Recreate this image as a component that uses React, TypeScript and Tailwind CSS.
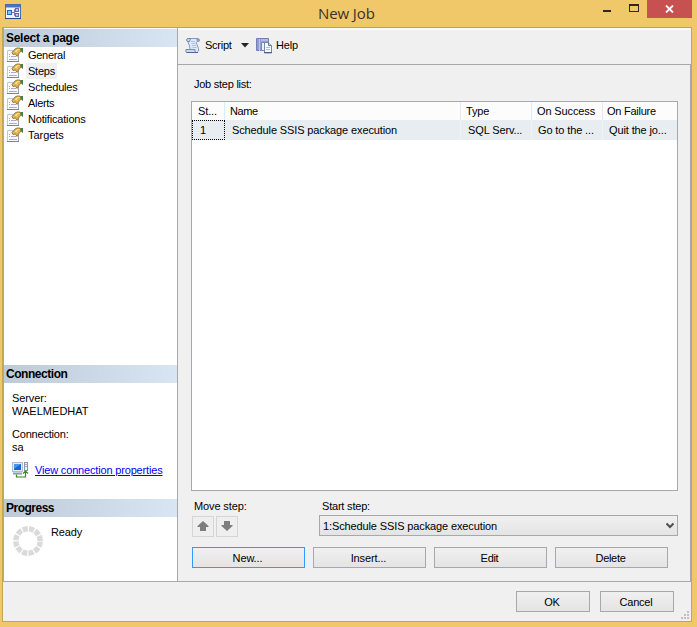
import type { ReactNode } from 'react';

function PageIcon() {
  return (
    <svg width="16" height="16" viewBox="0 0 16 16" className="shrink-0">
      <path d="M.5 3.500h11v11H.500z" fill="#fafbfe" stroke="#c3c8d8" />
      <path d="M0 14.500h12" fill="none" stroke="#76809f" />
      <path d="M11.500 14V8" fill="none" stroke="#98a0b8" />
      <path d="M2 7.500h1M2 9.500h1M2 12.500h1" stroke="#a3aed0" />
      <path d="M4 9.500h5M3 12.500h7" stroke="#a3aed0" />
      <path d="M5 5.500l3-3.500 2-1h3l1 3-2.500 3L10 9.500 8.500 7 6 7.500z" fill="#e5b445" stroke="#856632" strokeWidth=".8" />
      <path d="M5 4.500L7 2.500l1 .5-2 2.500z" fill="#9b9b98" />
      <path d="M7.500 4.500l3-2.500 2.500.5-2.500 1-1 2z" fill="#ffe68c" />
      <path d="M13.500 1H16v5l-2-1.500z" fill="#3f7e51" />
    </svg>
  );
}

function AppIcon() {
  return (
    <svg width="16" height="16" viewBox="0 0 16 16" className="mt-1 ml-[5px] shrink-0">
      <rect x=".5" y=".5" width="15" height="14" fill="#eef3fd" stroke="#4a6cae" />
      <path d="M1 1h14v2.500H1z" fill="#4673cb" />
      <path d="M0 14.500h16" stroke="#24457f" />
      <path d="M7 8.500h2M11 5.500H9.500v6H11" fill="none" stroke="#7b72b0" />
      <rect x="2.500" y="6.500" width="4" height="4" fill="#8fc0fa" stroke="#2b62cd" />
      <rect x="10.500" y="4.500" width="3" height="3" fill="#c5bce8" stroke="#7067ac" />
      <rect x="10.500" y="9.500" width="3" height="3" fill="#c5bce8" stroke="#7067ac" />
    </svg>
  );
}

function ScriptIcon() {
  return (
    <svg width="17" height="17" viewBox="0 0 17 17" className="shrink-0">
      <path d="M2.500 1.500h11q2 1 .5 3h-2q-1.500 1 0 3l1.500 4q1 3-1.500 4H3l2-3.500-.5-3L3 5Q.5 2.500 2.500 1.500z" fill="#dce8fb" stroke="#8599c0" />
      <path d="M2.500 1.500h3l-1 3H2.500Q.5 3 2.500 1.500zM1 12.500h9q-1 2 1.500 3H2Q0 15 1 12.500z" fill="#c9d7f0" stroke="#748ab5" />
      <path d="M1.500 15.500H13" stroke="#4f6797" />
      <path d="M6 4.500h4M6.500 6.500h4M7 8.500h4M7.500 10.500h4" stroke="#afc2e5" />
      <path d="M11 2h3v2h-2z" fill="#8aa1d0" />
    </svg>
  );
}

function HelpIcon() {
  return (
    <svg width="17" height="17" viewBox="0 0 17 17" className="shrink-0">
      <path d="M.5 1.500h12v12H.500z" fill="#949dce" stroke="#747eb4" />
      <path d="M3.500 2v12" stroke="#bcc5ea" />
      <path d="M5 2h7v2H5z" fill="#b3bce5" />
      <path d="M5.500 5.500h4l2 2v6h-6z" fill="#edf2fc" stroke="#7889af" />
      <path d="M8.500 5.500h4l3 3v7.500h-7z" fill="#f7faff" stroke="#7488a8" />
      <path d="M12.500 5.500v3h3" fill="#c6d8ed" stroke="#62789b" />
      <path d="M10 10.500h4M10 12.500h4" stroke="#a9bdd6" />
      <path d="M8 15.500h8" stroke="#4c6285" />
    </svg>
  );
}

function ConnectionIcon() {
  return (
    <svg width="17" height="17" viewBox="0 0 17 17" className="shrink-0">
      <rect x=".5" y=".5" width="10" height="9" fill="#e8edf5" stroke="#b0bad0" />
      <rect x="2" y="2" width="7" height="6" fill="#1764d9" />
      <path d="M2 2h7L2 7z" fill="#4596ee" />
      <path d="M1 11.500h9" stroke="#8c98b0" strokeWidth="2" />
      <rect x="12.500" y=".5" width="3" height="8" fill="#eef1f5" stroke="#8a96aa" />
      <path d="M13 2.500h2M13 4.500h2" stroke="#a4afbd" />
      <path d="M4.500 12.500v2.500h9V9M11 11.500l2.500-2.500 2.500 2.500" fill="none" stroke="#2f9113" strokeWidth="1.200" />
    </svg>
  );
}

function Spinner() {
  return (
    <svg width="30" height="30" viewBox="0 0 30 30" className="mt-[9px] ml-[9px] shrink-0">
      <circle cx="15" cy="15" r="12.200" fill="none" stroke="#dadada" strokeWidth="5.400" strokeDasharray="5.188 1.200" strokeDashoffset="-.6" />
    </svg>
  );
}

function SectionTitle({ children }: { children: ReactNode }) {
  return (
    <h2 className="h-[18px] shrink-0 bg-linear-to-r from-[#bdcbd9] to-[#d8e5f3] pl-0.5 text-[12px] leading-[18px] font-bold">
      {children}
    </h2>
  );
}

function Button({ children, className }: { children: ReactNode; className: string }) {
  return (
    <button className={`flex h-[21px] items-center justify-center border bg-linear-to-b from-[#f0f0f0] to-[#e4e4e4] pt-px pr-0.5 ${className}`}>
      {children}
    </button>
  );
}

function Arrow({ down }: { down?: boolean }) {
  return (
    <button className="flex h-[21px] w-[22px] items-center justify-center border border-[#d5d5d5] bg-[#efefef] pr-px pb-px">
      <svg width="12" height="12" viewBox="0 0 12 12" className={down ? 'rotate-180' : ''}>
        <path d="M6 1l5.500 5v1H9v4H3V7H.5V6z" fill="#7e7e7e" />
      </svg>
    </button>
  );
}

const pages = [
  { name: 'General', spacing: 'tracking-[-0.3px]' },
  { name: 'Steps', spacing: 'tracking-[-0.25px]' },
  { name: 'Schedules', spacing: 'tracking-[-0.2px]' },
  { name: 'Alerts', spacing: 'tracking-[-0.3px]' },
  { name: 'Notifications', spacing: 'tracking-[-0.18px]' },
  { name: 'Targets', spacing: 'tracking-[-0.05px]' },
];

export default function App() {
  return (
    <div className="flex h-[627px] w-[697px] flex-col overflow-hidden bg-[#f0c869] font-['Liberation_Sans',Arial,sans-serif] text-[11px] leading-[13px] tracking-[-0.12px] text-black">
      <header className="flex h-[27px] shrink-0">
        <AppIcon />
        <h1 className="ml-[297px] w-[60px] pt-[3px] font-['Open_Sans',sans-serif] text-[15px] leading-5 tracking-[-0.1px] whitespace-nowrap text-[#3a3323]">New Job</h1>
        <div className="ml-auto flex h-[18px]">
          <span className="mt-[10px] h-[2px] w-2 bg-[#2b2924]" />
          <span className="mt-1 ml-[18px] h-2 w-[10px] border border-t-2 border-[#2b2924]" />
          <button className="ml-2 flex w-[45px] items-center justify-center bg-[#c75050]">
            <svg width="9" height="8" viewBox="0 0 9 8"><path d="M1 .5l7 7M8 .5l-7 7" stroke="white" strokeWidth="1.800" /></svg>
          </button>
        </div>
        <span className="w-[5px]" />
      </header>

      <main className="ml-0.5 flex h-[595px] w-[690px] flex-col border border-[#c4a457] border-t-[#aaa18e] bg-[#f0f0f0]">
        <div className="flex h-[554px] border-b border-[#a6a8ab]">
          <aside className="flex w-[175px] flex-col border-x border-[#a6a8ab] bg-white pt-px">
            <SectionTitle><span className="tracking-[-0.28px]">Select a page</span></SectionTitle>
            <nav className="flex h-[318px] flex-col">
              {pages.map((page) => (
                <div key={page.name} className="flex h-4 items-center pl-[3px]">
                  <PageIcon />
                  <span className={`ml-[3px] h-4 pr-0.5 pl-0.5 leading-4 ${page.spacing} ${page.name === 'Steps' ? 'bg-[#f0f0f0]' : ''}`}>{page.name}</span>
                </div>
              ))}
            </nav>
            <SectionTitle><span className="tracking-[-0.45px]">Connection</span></SectionTitle>
            <section className="flex h-[116px] flex-col pt-[9px] pl-2">
              <p>Server:</p>
              <p className="tracking-[0.02px]">WAELMEDHAT</p>
              <p className="mt-[10px] tracking-[-0.2px]">Connection:</p>
              <p>sa</p>
              <div className="mt-2 flex items-center">
                <ConnectionIcon />
                <a className="ml-1.5 tracking-[-0.17px] whitespace-nowrap text-[#0000ff] underline">View connection properties</a>
              </div>
            </section>
            <SectionTitle><span className="tracking-[-0.5px]">Progress</span></SectionTitle>
            <section className="flex">
              <Spinner />
              <p className="mt-[9px] ml-2">Ready</p>
            </section>
          </aside>

          <div className="flex w-[513px] flex-col">
            <div className="flex h-[37px] items-center border-t-2 border-b border-[#a6a8ab] border-t-[#fafafa] pb-[3px] pl-[7px]">
              <ScriptIcon />
              <span className="ml-[3px] w-9 tracking-[-0.25px]">Script</span>
              <svg width="8" height="5" viewBox="0 0 8 5"><path d="M0 0h8L4 4.500z" fill="#262626" /></svg>
              <span className="w-[7px]" />
              <HelpIcon />
              <span className="ml-[3px] tracking-[-0.2px]">Help</span>
            </div>
            <section className="flex h-[516px] flex-col border-r border-[#a6a8ab] pt-[13px] pl-[13px]">
              <p className="ml-[3px] tracking-[-0.25px]">Job step list:</p>
              <div className="mt-[10px] h-[390px] w-[487px] border border-[#a6a8ab] bg-white">
                <div className="grid h-[18px] grid-cols-[33px_236px_71px_71px_74px] bg-[#fcfcfc] leading-[18px]">
                  <span className="border-r border-[#e1ebf7] pl-1.5">St...</span>
                  <span className="border-r border-[#e1ebf7] pl-[5px] tracking-[-0.4px]">Name</span>
                  <span className="border-r border-[#e1ebf7] pl-[5px]">Type</span>
                  <span className="border-r border-[#e1ebf7] pl-[5px]">On Success</span>
                  <span className="pl-[4px] tracking-[-0.25px]">On Failure</span>
                </div>
                <div className="grid h-5 grid-cols-[33px_236px_71px_71px_74px] bg-[#e8edf1] leading-5">
                  <span className="border border-dotted border-black pl-[7px] leading-[18px]">1</span>
                  <span className="border-r border-[#f0f3f6] pl-[7px]">Schedule SSIS package execution</span>
                  <span className="border-r border-[#f0f3f6] pl-[7px]">SQL Serv...</span>
                  <span className="border-r border-[#f0f3f6] pl-[6px]">Go to the ...</span>
                  <span className="pl-[6px]">Quit the jo...</span>
                </div>
              </div>
              <div className="mt-[9px] flex">
                <div className="w-[128px] pl-px">
                  <p className="ml-0.5">Move step:</p>
                  <div className="mt-[3px] flex gap-0.5"><Arrow /><Arrow down /></div>
                </div>
                <div>
                  <p className="ml-[3px] tracking-[-0.2px]">Start step:</p>
                  <div className="mt-0.5 flex h-[21px] w-[359px] items-center justify-between border border-[#a6a8ab] bg-linear-to-b from-[#f0f0f0] to-[#e4e4e4] pr-[3px] pl-[3px]">
                    <span className="pt-px">1:Schedule SSIS package execution</span>
                    <svg width="8" height="7" viewBox="0 0 8 7"><path d="M.5 1.500L4 5l3.500-3.500" fill="none" stroke="#505050" strokeWidth="2" /></svg>
                  </div>
                </div>
              </div>
              <div className="mt-[10px] ml-px flex gap-2">
                <Button className="w-[113px] border-[#3399ff]">New...</Button>
                <Button className="w-[113px] border-[#a6a8ab]">Insert...</Button>
                <Button className="w-[113px] border-[#a6a8ab] tracking-[-0.3px]">Edit</Button>
                <Button className="w-[113px] border-[#a6a8ab] tracking-[-0.3px]">Delete</Button>
              </div>
            </section>
          </div>
        </div>
        <footer className="flex h-[39px] pt-[9px] pl-[513px]">
          <Button className="w-[74px] border-[#a6a8ab]">OK</Button>
          <Button className="ml-[10px] w-[74px] border-[#a6a8ab] tracking-[-0.2px]">Cancel</Button>
          <svg width="8" height="8" viewBox="0 0 8 8" className="mt-5 ml-[7px]"><path d="M6 0h2v2H6zM3 3h2v2H3zM6 3h2v2H6zM0 6h2v2H0zM3 6h2v2H3zM6 6h2v2H6z" fill="#c0c0c0" /></svg>
        </footer>
      </main>
    </div>
  );
}
